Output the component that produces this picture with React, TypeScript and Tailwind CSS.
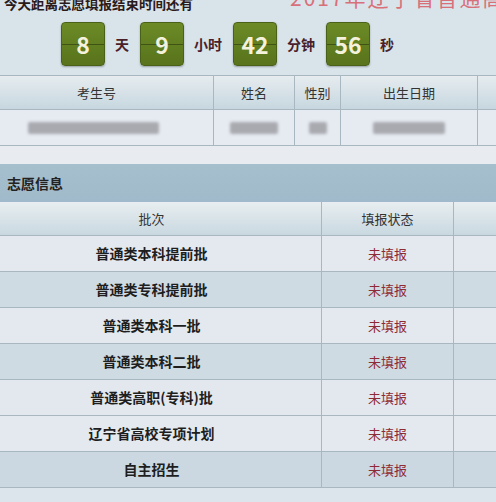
import React from "react";

const font = { fontFamily: '"Noto Sans CJK SC", "Noto Sans", sans-serif' };

function Box({ n }: { n: string }) {
  return (
    <div className="relative w-[44px] h-[44px] shrink-0 rounded-[4px] bg-gradient-to-b from-[#6c8b26] to-[#58731c] border border-[#4a611a] flex items-center justify-center shadow-[0_1px_2px_rgba(0,0,0,0.3)]">
      <div className="absolute left-0 right-0 top-[21px] h-[1px] bg-[#3f5314]" />
      <span className="relative text-[23px] font-bold text-[#f4f2dc] leading-none">{n}</span>
    </div>
  );
}

function Blur({ w, h = 13 }: { w: number; h?: number }) {
  return <div className="bg-[#a9aab0] rounded-[2px] blur-[1.5px]" style={{ width: w, height: h }} />;
}

const rows: { name: string; bg: string }[] = [
  { name: "普通类本科提前批", bg: "bg-[#e4e9ef]" },
  { name: "普通类专科提前批", bg: "bg-[#cfdbe3]" },
  { name: "普通类本科一批", bg: "bg-[#e4e9ef]" },
  { name: "普通类本科二批", bg: "bg-[#cfdbe3]" },
  { name: "普通类高职(专科)批", bg: "bg-[#e2e8ee]" },
  { name: "辽宁省高校专项计划", bg: "bg-[#e4e9ef]" },
  { name: "自主招生", bg: "bg-[#cbd8e1]" },
];

export default function App() {
  return (
    <div className="w-[496px] h-[502px] overflow-hidden bg-[#d9e3ea] text-[#222]" style={font}>
      {/* top line */}
      <div className="h-[22px] overflow-hidden">
        <div className="flex items-start whitespace-nowrap">
          <div className="shrink-0 ml-[4px] mt-[-4px] text-[13.5px] font-semibold text-[#2a1a1a] leading-[14px]">今天距离志愿填报结束时间还有</div>
          <div className="shrink-0 ml-[97px] mt-[-13px] text-[21px] tracking-[2px] text-[#d8707a] leading-[21px]">2017年辽宁省普通高考志愿填报</div>
        </div>
      </div>
      {/* countdown */}
      <div className="h-[53px] flex items-start pl-[61px] whitespace-nowrap">
        <Box n="8" />
        <span className="ml-[10px] mr-[11px] mt-[12px] text-[14px] font-semibold text-[#4a1f2c]">天</span>
        <Box n="9" />
        <span className="ml-[10px] mr-[11px] mt-[12px] text-[14px] font-semibold text-[#4a1f2c]">小时</span>
        <Box n="42" />
        <span className="ml-[10px] mr-[11px] mt-[12px] text-[14px] font-semibold text-[#4a1f2c]">分钟</span>
        <Box n="56" />
        <span className="ml-[10px] mt-[12px] text-[14px] font-semibold text-[#4a1f2c]">秒</span>
      </div>
      {/* student table */}
      <div className="ml-[-20px] w-[540px] border-t border-[#a9b7c1]">
        <div className="flex h-[34px] bg-gradient-to-b from-[#e6ecf0] to-[#c7d7df] border-b border-[#a9b7c1] text-[13px] text-[#333]">
          <div className="w-[234px] flex items-center justify-center border-r border-[#a9b7c1]">考生号</div>
          <div className="w-[81px] flex items-center justify-center border-r border-[#a9b7c1]">姓名</div>
          <div className="w-[46px] flex items-center justify-center border-r border-[#a9b7c1]">性别</div>
          <div className="w-[137px] flex items-center justify-center border-r border-[#a9b7c1]">出生日期</div>
          <div className="flex-1" />
        </div>
        <div className="flex h-[36px] bg-[#e6ebf1] border-b border-[#a9b7c1]">
          <div className="w-[234px] flex items-center pl-[48px] border-r border-[#a9b7c1]"><Blur w={131} h={12} /></div>
          <div className="w-[81px] flex items-center justify-center border-r border-[#a9b7c1]"><Blur w={48} h={12} /></div>
          <div className="w-[46px] flex items-center justify-center border-r border-[#a9b7c1]"><Blur w={18} h={12} /></div>
          <div className="w-[137px] flex items-center justify-center border-r border-[#a9b7c1]"><Blur w={72} h={12} /></div>
          <div className="flex-1" />
        </div>
        <div className="h-[18px] bg-[#e8ecf1]" />
      </div>
      {/* section header */}
      <div className="h-[38px] bg-gradient-to-b from-[#a6bfcd] to-[#a1bacb] flex items-center pl-[7px] text-[14px] font-bold text-[#222]">志愿信息</div>
      {/* choices table */}
      <div className="ml-[-18px] w-[540px]">
        <div className="flex h-[34px] bg-gradient-to-b from-[#e8eef1] to-[#c9d8e0] border-b border-[#a9b7c1] text-[13px] text-[#333]">
          <div className="w-[340px] flex items-center justify-center border-r border-[#a9b7c1]">批次</div>
          <div className="w-[132px] flex items-center justify-center border-r border-[#a9b7c1]">填报状态</div>
          <div className="flex-1" />
        </div>
        {rows.map((r) => (
          <div key={r.name} className={`flex h-[36px] ${r.bg} border-b border-[#a9b7c1]`}>
            <div className="w-[340px] flex items-center justify-center border-r border-[#a9b7c1] text-[14px] font-bold text-[#1e1e1e]">{r.name}</div>
            <div className="w-[132px] flex items-center justify-center border-r border-[#a9b7c1] text-[13px] text-[#8e2a36]">未填报</div>
            <div className="flex-1" />
          </div>
        ))}
      </div>
      <div className="h-[20px] bg-[#dde5ec]" />
    </div>
  );
}
